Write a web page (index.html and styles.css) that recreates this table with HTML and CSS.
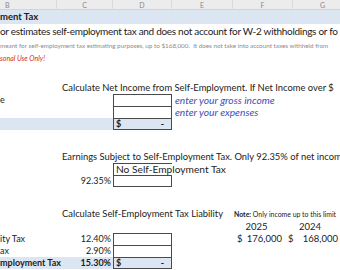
FILE: index.html
```html
<!DOCTYPE html>
<html>
<head>
<meta charset="utf-8">
<link rel="stylesheet" href="styles.css">
</head>
<body>
<div class="sheet">
  <div class="colhead">
    <span>B</span><span>C</span><span>D</span><span>E</span><span>F</span><span>G</span>
  </div>
  <div class="row r-title"><span class="title">ment Tax</span></div>
  <div class="row r-lead"><span class="lead">or estimates self-employment tax and does not account for W-2 withholdings or fo</span></div>
  <div class="row r-note"><span class="fine">meant for self-employment tax estimating purposes, up to $168,000.&nbsp; It does not take into account taxes withheld from</span></div>
  <div class="row r-warn"><span class="warn">sonal Use Only!</span></div>
  <div class="gap18"></div>

  <div class="row"><span class="heading">Calculate Net Income from Self-Employment. If Net Income over $</span></div>
  <div class="row grid">
    <span class="c-b">e</span><span class="c-c"></span><span class="c-d box"></span><span class="c-e hint">enter your gross income</span>
  </div>
  <div class="row grid">
    <span class="c-b"></span><span class="c-c"></span><span class="c-d box"></span><span class="c-e hint">enter your expenses</span>
  </div>
  <div class="row grid total">
    <span class="c-b"></span><span class="c-c"></span><span class="c-d box money"><b>$</b><b>-</b></span>
  </div>
  <div class="gap21"></div>

  <div class="row"><span class="heading">Earnings Subject to Self-Employment Tax. Only 92.35% of net income</span></div>
  <div class="row grid">
    <span class="c-b"></span><span class="c-c"></span><span class="c-d box-top">No Self-Employment Tax</span>
  </div>
  <div class="row grid">
    <span class="c-b"></span><span class="c-c pct">92.35%</span><span class="c-d box-bot"></span>
  </div>
  <div class="gap21"></div>

  <div class="row grid">
    <span class="span4 heading">Calculate Self-Employment Tax Liability</span><span class="c-f notecell"><b>Note:</b> Only income up to this limit</span>
  </div>
  <div class="row grid tall">
    <span class="c-b"></span><span class="c-c"></span><span class="c-d"></span><span class="c-e"></span><span class="c-f year">2025</span><span class="c-g year">2024</span>
  </div>
  <div class="row grid">
    <span class="c-b">ity Tax</span><span class="c-c pct">12.40%</span><span class="c-d box"></span><span class="c-e"></span><span class="c-f acct"><span>$</span><span>176,000</span></span><span class="c-g acct"><span>$</span><span>168,000</span></span>
  </div>
  <div class="row grid">
    <span class="c-b">ax</span><span class="c-c pct">2.90%</span><span class="c-d box"></span>
  </div>
  <div class="row grid total">
    <span class="c-b strong">mployment Tax</span><span class="c-c pct strong">15.30%</span><span class="c-d box money"><b>$</b><b>-</b></span>
  </div>
</div>
</body>
</html>
```
FILE: styles.css
```css
html, body {
  margin: 0;
  padding: 0;
  background: #ffffff;
}
body {
  font-family: Lato, "Liberation Sans", sans-serif;
  color: #1c1c1c;
  font-size: 9px;
  overflow: hidden;
  width: 340px;
  height: 270px;
}
.sheet {
  width: 340px;
  overflow: hidden;
}
.colhead {
  display: grid;
  grid-template-columns: 57px 56px 59px 61px 60px 60px;
  height: 10px;
  background: #ececec;
  border-bottom: 1px solid #d4d4d4;
  box-sizing: border-box;
  font-size: 7px;
  line-height: 10px;
  color: #8a8a8a;
  width: 353px;
}
.colhead span {
  text-align: center;
  border-right: 1px solid #dadada;
}
.colhead span:first-child {
  text-align: left;
  padding-left: 5px;
}
.row {
  height: 12px;
  line-height: 12px;
  white-space: nowrap;
}
.grid {
  display: grid;
  grid-template-columns: 57px 56px 59px 61px 51px 56px;
}
.grid > span {
  overflow: visible;
  min-width: 0;
}
.tall { height: 13px; line-height: 13px; font-size: 9.5px; }
.r-title {
  height: 14px;
  line-height: 14px;
  background: #dce6f2;
  font-weight: 700;
  font-size: 9.5px;
}
.r-lead {
  height: 15px;
  line-height: 15px;
}
.lead {
  font-size: 10px;
  letter-spacing: -0.3px;
}
.r-note { height: 12px; }
.fine {
  font-size: 6.3px;
  color: #8c8c8c;
}
.r-warn { height: 13px; line-height: 13px; }
.warn {
  font-size: 7px;
  font-style: italic;
  color: #d02a2a;
}
.gap18 { height: 18px; }
.gap21 { height: 21px; }
.heading {
  display: block;
  padding-left: 62px;
  font-size: 9.4px;
}
.span4 {
  grid-column: 1 / span 4;
}
.c-b { padding-left: 0; }
.pct { text-align: right; padding-right: 2px; }
.strong { font-weight: 700; }
.box {
  border: 1px solid #4a4a4a;
  border-bottom: none;
  box-sizing: border-box;
  background: #ffffff;
}
.total .box {
  border-bottom: 1px solid #4a4a4a;
}
.total {
  background: linear-gradient(to right, #dce6f2 0, #dce6f2 172px, #ffffff 172px);
}
.total .box { background: #dce6f2; }
.money {
  display: flex;
  justify-content: space-between;
  padding: 0 7px 0 2px;
  line-height: 10px;
}
.box-top {
  border-top: 1px solid #4a4a4a;
  border-left: 1px solid #4a4a4a;
  padding-left: 2px;
  line-height: 11px;
  font-size: 10.2px;
}
.box-bot {
  border: 1px solid #4a4a4a;
  box-sizing: border-box;
}
.hint {
  color: #3a4db8;
  font-style: italic;
  padding-left: 3px;
  font-size: 10.2px;
}
.notecell {
  font-size: 6.9px;
  padding-left: 1px;
}
.year {
  text-align: center;
  padding-right: 4px;
}
.acct {
  display: flex;
  justify-content: space-between;
  padding: 0 2px 0 4px;
  font-size: 9.5px;
}
```
